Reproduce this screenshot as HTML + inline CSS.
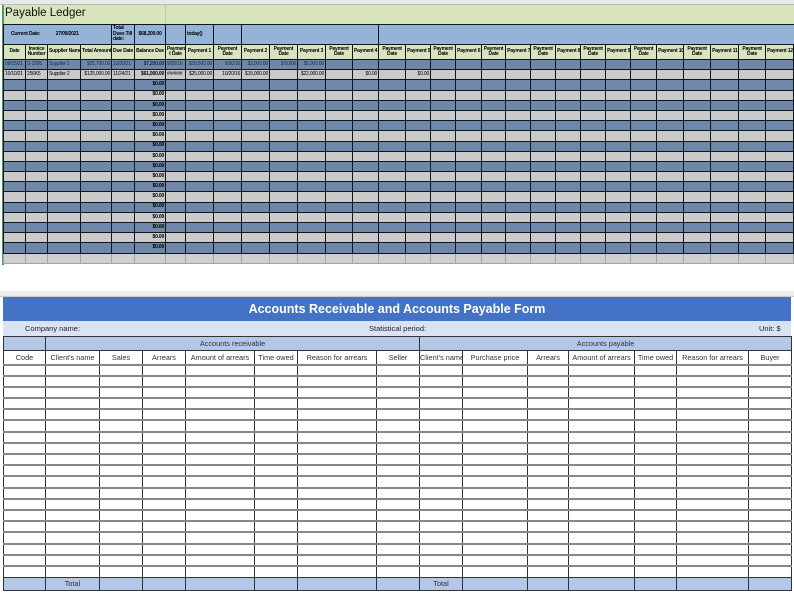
<!DOCTYPE html>
<html><head><meta charset="utf-8"><style>
*{box-sizing:border-box;margin:0;padding:0}
body{width:794px;height:596px;background:#fff;font-family:"Liberation Sans",sans-serif;position:relative;overflow:hidden}
.abs{position:absolute}
table{border-collapse:collapse;table-layout:fixed}
#t1 td{border:1px solid #10161e;font-size:5px;padding:0 1px;overflow:hidden;white-space:nowrap;line-height:5.5px;letter-spacing:-0.2px}
#t1 tr.h td{background:#d7e4bd;font-weight:bold;text-align:center;white-space:normal;height:15px}
#t1 tr.c td{background:#95b3d7;font-weight:bold;height:20px;white-space:normal}
#t1 tr.d td{background:#6f88a9;height:10.2px}
#t1 tr.l td{background:#cacaca;height:10.2px}
#t1 tr.g td{background:#cfcfcf;height:10.2px;border-color:#a5a5a5}
#t1 td.r{text-align:right}
#t1 td.b{font-weight:bold;text-align:right}
#t1 tr.r1 td{color:#1a2a4a}
#t2 td{border:1px solid #333;font-size:7.3px;color:#333;text-align:center;overflow:hidden;white-space:nowrap;padding:0}
#t2 tr.e td{height:11.2px;border-top:2px solid #888;border-bottom:1px solid #333}
#t2 tr.t td{background:#b4c7e7;height:13px}
</style></head><body>
<div class="abs" style="left:0;top:0;width:794px;height:5px;background:#e8e8e8;border-bottom:1px solid #bbb"></div>
<div class="abs" style="left:3px;top:5px;width:791px;height:19px;background:#d8e4bc"></div>
<div class="abs" style="left:165px;top:5px;width:1px;height:19px;background:#c0c8b0"></div>
<div class="abs" style="left:5px;top:7px;font-size:11.5px;color:#111">Payable Ledger</div>
<div class="abs" style="left:2px;top:5px;width:1.5px;height:260px;background:#4a9a5a"></div>

<table id="t1" class="abs" style="left:3px;top:24px;width:790px">
<colgroup><col style="width:22px"><col style="width:22px"><col style="width:33px"><col style="width:31px"><col style="width:23px"><col style="width:31px"><col style="width:20px"><col style="width:28px"><col style="width:28px"><col style="width:28px"><col style="width:28px"><col style="width:28px"><col style="width:27px"><col style="width:26px"><col style="width:27px"><col style="width:25px"><col style="width:25px"><col style="width:26px"><col style="width:24px"><col style="width:25px"><col style="width:25px"><col style="width:25px"><col style="width:25px"><col style="width:25px"><col style="width:26px"><col style="width:27px"><col style="width:27px"><col style="width:28px"><col style="width:27px"><col style="width:28px"></colgroup>
<tr class="c"><td colspan="4" style="padding-left:7px">Current Date: &nbsp; &nbsp; &nbsp; &nbsp; &nbsp; &nbsp; 27/09/2021</td><td>Total Dues Till date:</td><td style="text-align:center">$68,200.00</td><td></td><td>today()</td><td></td><td colspan="5"></td><td colspan="16" style="border-right:0"></td></tr>
<tr class="h"><td>Date</td><td>Invoice Number</td><td style="white-space:nowrap">Supplier Name</td><td style="white-space:nowrap">Total Amount</td><td style="white-space:nowrap">Due Date</td><td style="white-space:nowrap">Balance Due</td><td>Paymen t Date</td><td style="white-space:nowrap">Payment 1</td><td>Payment Date</td><td style="white-space:nowrap">Payment 2</td><td>Payment Date</td><td style="white-space:nowrap">Payment 3</td><td>Payment Date</td><td style="white-space:nowrap">Payment 4</td><td>Payment Date</td><td style="white-space:nowrap">Payment 5</td><td>Payment Date</td><td style="white-space:nowrap">Payment 6</td><td>Payment Date</td><td style="white-space:nowrap">Payment 7</td><td>Payment Date</td><td style="white-space:nowrap">Payment 8</td><td>Payment Date</td><td style="white-space:nowrap">Payment 9</td><td>Payment Date</td><td style="white-space:nowrap">Payment 10</td><td>Payment Date</td><td style="white-space:nowrap">Payment 11</td><td>Payment Date</td><td style="white-space:nowrap">Payment 12</td></tr>
<tr class="d r1"><td>09/15/21</td><td>S-1005</td><td>Supplier 1</td><td class="r">$25,700.00</td><td>10/30/21</td><td class="b">$7,200.00</td><td>9/25/16</td><td class="r">$10,500.00</td><td class="r">9/30/16</td><td class="r">$3,000.00</td><td class="r">5/10/06</td><td class="r">$5,000.00</td><td></td><td></td><td></td><td></td><td></td><td></td><td></td><td></td><td></td><td></td><td></td><td></td><td></td><td></td><td></td><td></td><td></td><td></td></tr>
<tr class="l"><td>10/10/21</td><td>256K5</td><td>Supplier 2</td><td class="r">$125,000.00</td><td>11/24/21</td><td class="b">$61,000.00</td><td>######</td><td class="r">$25,000.00</td><td class="r">10/20/16</td><td class="r">$15,000.00</td><td></td><td class="r">$22,000.00</td><td></td><td class="r">$0.00</td><td></td><td class="r">$0.00</td><td></td><td></td><td></td><td></td><td></td><td></td><td></td><td></td><td></td><td></td><td></td><td></td><td></td><td></td></tr>
<tr class="d"><td></td><td></td><td></td><td></td><td></td><td class="b">$0.00</td><td></td><td></td><td></td><td></td><td></td><td></td><td></td><td></td><td></td><td></td><td></td><td></td><td></td><td></td><td></td><td></td><td></td><td></td><td></td><td></td><td></td><td></td><td></td><td></td></tr>
<tr class="l"><td></td><td></td><td></td><td></td><td></td><td class="b">$0.00</td><td></td><td></td><td></td><td></td><td></td><td></td><td></td><td></td><td></td><td></td><td></td><td></td><td></td><td></td><td></td><td></td><td></td><td></td><td></td><td></td><td></td><td></td><td></td><td></td></tr>
<tr class="d"><td></td><td></td><td></td><td></td><td></td><td class="b">$0.00</td><td></td><td></td><td></td><td></td><td></td><td></td><td></td><td></td><td></td><td></td><td></td><td></td><td></td><td></td><td></td><td></td><td></td><td></td><td></td><td></td><td></td><td></td><td></td><td></td></tr>
<tr class="l"><td></td><td></td><td></td><td></td><td></td><td class="b">$0.00</td><td></td><td></td><td></td><td></td><td></td><td></td><td></td><td></td><td></td><td></td><td></td><td></td><td></td><td></td><td></td><td></td><td></td><td></td><td></td><td></td><td></td><td></td><td></td><td></td></tr>
<tr class="d"><td></td><td></td><td></td><td></td><td></td><td class="b">$0.00</td><td></td><td></td><td></td><td></td><td></td><td></td><td></td><td></td><td></td><td></td><td></td><td></td><td></td><td></td><td></td><td></td><td></td><td></td><td></td><td></td><td></td><td></td><td></td><td></td></tr>
<tr class="l"><td></td><td></td><td></td><td></td><td></td><td class="b">$0.00</td><td></td><td></td><td></td><td></td><td></td><td></td><td></td><td></td><td></td><td></td><td></td><td></td><td></td><td></td><td></td><td></td><td></td><td></td><td></td><td></td><td></td><td></td><td></td><td></td></tr>
<tr class="d"><td></td><td></td><td></td><td></td><td></td><td class="b">$0.00</td><td></td><td></td><td></td><td></td><td></td><td></td><td></td><td></td><td></td><td></td><td></td><td></td><td></td><td></td><td></td><td></td><td></td><td></td><td></td><td></td><td></td><td></td><td></td><td></td></tr>
<tr class="l"><td></td><td></td><td></td><td></td><td></td><td class="b">$0.00</td><td></td><td></td><td></td><td></td><td></td><td></td><td></td><td></td><td></td><td></td><td></td><td></td><td></td><td></td><td></td><td></td><td></td><td></td><td></td><td></td><td></td><td></td><td></td><td></td></tr>
<tr class="d"><td></td><td></td><td></td><td></td><td></td><td class="b">$0.00</td><td></td><td></td><td></td><td></td><td></td><td></td><td></td><td></td><td></td><td></td><td></td><td></td><td></td><td></td><td></td><td></td><td></td><td></td><td></td><td></td><td></td><td></td><td></td><td></td></tr>
<tr class="l"><td></td><td></td><td></td><td></td><td></td><td class="b">$0.00</td><td></td><td></td><td></td><td></td><td></td><td></td><td></td><td></td><td></td><td></td><td></td><td></td><td></td><td></td><td></td><td></td><td></td><td></td><td></td><td></td><td></td><td></td><td></td><td></td></tr>
<tr class="d"><td></td><td></td><td></td><td></td><td></td><td class="b">$0.00</td><td></td><td></td><td></td><td></td><td></td><td></td><td></td><td></td><td></td><td></td><td></td><td></td><td></td><td></td><td></td><td></td><td></td><td></td><td></td><td></td><td></td><td></td><td></td><td></td></tr>
<tr class="l"><td></td><td></td><td></td><td></td><td></td><td class="b">$0.00</td><td></td><td></td><td></td><td></td><td></td><td></td><td></td><td></td><td></td><td></td><td></td><td></td><td></td><td></td><td></td><td></td><td></td><td></td><td></td><td></td><td></td><td></td><td></td><td></td></tr>
<tr class="d"><td></td><td></td><td></td><td></td><td></td><td class="b">$0.00</td><td></td><td></td><td></td><td></td><td></td><td></td><td></td><td></td><td></td><td></td><td></td><td></td><td></td><td></td><td></td><td></td><td></td><td></td><td></td><td></td><td></td><td></td><td></td><td></td></tr>
<tr class="l"><td></td><td></td><td></td><td></td><td></td><td class="b">$0.00</td><td></td><td></td><td></td><td></td><td></td><td></td><td></td><td></td><td></td><td></td><td></td><td></td><td></td><td></td><td></td><td></td><td></td><td></td><td></td><td></td><td></td><td></td><td></td><td></td></tr>
<tr class="d"><td></td><td></td><td></td><td></td><td></td><td class="b">$0.00</td><td></td><td></td><td></td><td></td><td></td><td></td><td></td><td></td><td></td><td></td><td></td><td></td><td></td><td></td><td></td><td></td><td></td><td></td><td></td><td></td><td></td><td></td><td></td><td></td></tr>
<tr class="l"><td></td><td></td><td></td><td></td><td></td><td class="b">$0.00</td><td></td><td></td><td></td><td></td><td></td><td></td><td></td><td></td><td></td><td></td><td></td><td></td><td></td><td></td><td></td><td></td><td></td><td></td><td></td><td></td><td></td><td></td><td></td><td></td></tr>
<tr class="d"><td></td><td></td><td></td><td></td><td></td><td class="b">$0.00</td><td></td><td></td><td></td><td></td><td></td><td></td><td></td><td></td><td></td><td></td><td></td><td></td><td></td><td></td><td></td><td></td><td></td><td></td><td></td><td></td><td></td><td></td><td></td><td></td></tr>
<tr class="g"><td></td><td></td><td></td><td></td><td></td><td></td><td></td><td></td><td></td><td></td><td></td><td></td><td></td><td></td><td></td><td></td><td></td><td></td><td></td><td></td><td></td><td></td><td></td><td></td><td></td><td></td><td></td><td></td><td></td><td></td></tr>
</table>

<div class="abs" style="left:0;top:291px;width:794px;height:6px;background:#ececec;border-bottom:1px solid #ccc"></div>
<div class="abs" style="left:3px;top:297px;width:788px;height:24px;background:#4472c4;color:#fff;font-weight:bold;font-size:12.5px;text-align:center;line-height:24px">Accounts Receivable and Accounts Payable Form</div>
<div class="abs" style="left:3px;top:321px;width:788px;height:15px;background:#dae3f3;font-size:7.5px;line-height:15px;color:#222">
<span class="abs" style="left:22px">Company name:</span><span class="abs" style="left:366px">Statistical period:</span><span class="abs" style="left:756px">Unit: $</span></div>

<table id="t2" class="abs" style="left:3px;top:336px;width:788px">
<colgroup><col style="width:42px"><col style="width:54px"><col style="width:43px"><col style="width:43px"><col style="width:69px"><col style="width:43px"><col style="width:79px"><col style="width:43px"><col style="width:43px"><col style="width:65px"><col style="width:41px"><col style="width:66px"><col style="width:42px"><col style="width:72px"><col style="width:43px"></colgroup>
<tr style="background:#b4c7e7"><td style="height:14px"></td><td colspan="7">Accounts receivable</td><td colspan="7">Accounts payable</td></tr>
<tr><td style="height:14px">Code</td><td>Client's name</td><td>Sales</td><td>Arrears</td><td>Amount of arrears</td><td>Time owed</td><td>Reason for arrears</td><td>Seller</td><td>Client's name</td><td>Purchase price</td><td>Arrears</td><td>Amount of arrears</td><td>Time owed</td><td>Reason for arrears</td><td>Buyer</td></tr>
<tr class="e"><td></td><td></td><td></td><td></td><td></td><td></td><td></td><td></td><td></td><td></td><td></td><td></td><td></td><td></td><td></td></tr>
<tr class="e"><td></td><td></td><td></td><td></td><td></td><td></td><td></td><td></td><td></td><td></td><td></td><td></td><td></td><td></td><td></td></tr>
<tr class="e"><td></td><td></td><td></td><td></td><td></td><td></td><td></td><td></td><td></td><td></td><td></td><td></td><td></td><td></td><td></td></tr>
<tr class="e"><td></td><td></td><td></td><td></td><td></td><td></td><td></td><td></td><td></td><td></td><td></td><td></td><td></td><td></td><td></td></tr>
<tr class="e"><td></td><td></td><td></td><td></td><td></td><td></td><td></td><td></td><td></td><td></td><td></td><td></td><td></td><td></td><td></td></tr>
<tr class="e"><td></td><td></td><td></td><td></td><td></td><td></td><td></td><td></td><td></td><td></td><td></td><td></td><td></td><td></td><td></td></tr>
<tr class="e"><td></td><td></td><td></td><td></td><td></td><td></td><td></td><td></td><td></td><td></td><td></td><td></td><td></td><td></td><td></td></tr>
<tr class="e"><td></td><td></td><td></td><td></td><td></td><td></td><td></td><td></td><td></td><td></td><td></td><td></td><td></td><td></td><td></td></tr>
<tr class="e"><td></td><td></td><td></td><td></td><td></td><td></td><td></td><td></td><td></td><td></td><td></td><td></td><td></td><td></td><td></td></tr>
<tr class="e"><td></td><td></td><td></td><td></td><td></td><td></td><td></td><td></td><td></td><td></td><td></td><td></td><td></td><td></td><td></td></tr>
<tr class="e"><td></td><td></td><td></td><td></td><td></td><td></td><td></td><td></td><td></td><td></td><td></td><td></td><td></td><td></td><td></td></tr>
<tr class="e"><td></td><td></td><td></td><td></td><td></td><td></td><td></td><td></td><td></td><td></td><td></td><td></td><td></td><td></td><td></td></tr>
<tr class="e"><td></td><td></td><td></td><td></td><td></td><td></td><td></td><td></td><td></td><td></td><td></td><td></td><td></td><td></td><td></td></tr>
<tr class="e"><td></td><td></td><td></td><td></td><td></td><td></td><td></td><td></td><td></td><td></td><td></td><td></td><td></td><td></td><td></td></tr>
<tr class="e"><td></td><td></td><td></td><td></td><td></td><td></td><td></td><td></td><td></td><td></td><td></td><td></td><td></td><td></td><td></td></tr>
<tr class="e"><td></td><td></td><td></td><td></td><td></td><td></td><td></td><td></td><td></td><td></td><td></td><td></td><td></td><td></td><td></td></tr>
<tr class="e"><td></td><td></td><td></td><td></td><td></td><td></td><td></td><td></td><td></td><td></td><td></td><td></td><td></td><td></td><td></td></tr>
<tr class="e"><td></td><td></td><td></td><td></td><td></td><td></td><td></td><td></td><td></td><td></td><td></td><td></td><td></td><td></td><td></td></tr>
<tr class="e"><td></td><td></td><td></td><td></td><td></td><td></td><td></td><td></td><td></td><td></td><td></td><td></td><td></td><td></td><td></td></tr>
<tr class="t"><td></td><td>Total</td><td></td><td></td><td></td><td></td><td></td><td></td><td>Total</td><td></td><td></td><td></td><td></td><td></td><td></td></tr>
</table>
</body></html>
